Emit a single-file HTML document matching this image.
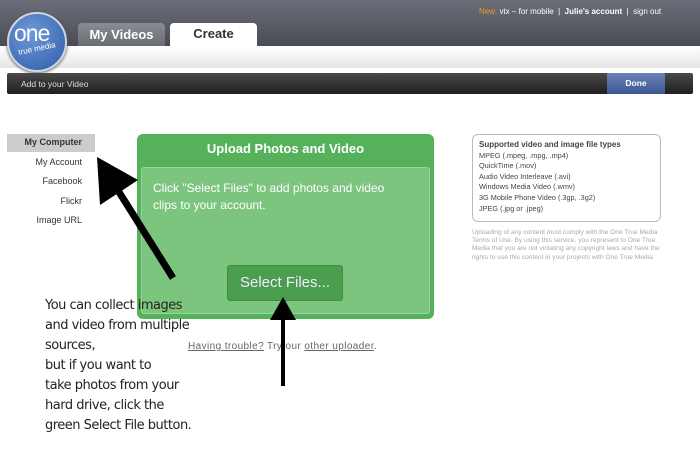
<!DOCTYPE html>
<html><head><style>
body{margin:0;width:700px;height:458px;overflow:hidden;background:#fff;font-family:"Liberation Sans",sans-serif;position:relative}
.a{position:absolute}
</style></head><body>
<div class="a" style="left:0;top:0;width:700px;height:46px;background:linear-gradient(#6b6e78,#4a4c55)"></div>
<div class="a" style="left:0;top:46px;width:700px;height:22px;background:linear-gradient(#fff,#e6e6e6)"></div>
<div class="a" style="left:78px;top:23px;width:87px;height:23px;background:linear-gradient(#8a8c94,#6a6c74);border-radius:4px 4px 0 0;color:#fff;font-weight:bold;font-size:13px;text-align:center;line-height:23px">My Videos</div>
<div class="a" style="left:170px;top:23px;width:87px;height:23px;background:#fff;border-radius:4px 4px 0 0;color:#333;font-weight:bold;font-size:13px;text-align:center;line-height:22px">Create</div>
<div class="a" style="left:7px;top:12px;width:56px;height:56px;border-radius:50%;background:radial-gradient(circle at 40% 35%,#6f9ad8,#2c5aa8);border:2px solid #cfd6e2;box-shadow:0 1px 3px #555"></div>
<div class="a" style="left:14px;top:22px;color:#fff;font-size:23px;line-height:22px;letter-spacing:-1px">one</div>
<div class="a" style="left:18px;top:44px;color:#fff;font-size:8px;transform:rotate(-12deg)">true media</div>
<div class="a" style="left:479px;top:7px;font-size:8px;color:#fff;white-space:nowrap"><span style="color:#f59a1e">New:</span> vtx – for mobile &nbsp;| &nbsp;<b>Julie's account</b> &nbsp;| &nbsp;sign out</div>
<div class="a" style="left:7px;top:73px;width:686px;height:21px;background:linear-gradient(#4a4a4a,#1e1e1e);border-radius:2px"></div>
<div class="a" style="left:21px;top:79px;font-size:8.5px;color:#ddd">Add to your Video</div>
<div class="a" style="left:607px;top:73px;width:58px;height:21px;background:linear-gradient(#6a82b8,#3c5694);color:#fff;font-weight:bold;font-size:8.5px;text-align:center;line-height:21px">Done</div>
<div class="a" style="left:7px;top:134px;width:88px;height:18px;background:#ccc"></div>
<div class="a" style="left:0;top:133px;width:82px;text-align:right;font-size:9px;color:#333;line-height:19.5px"><b>My Computer</b><br>My Account<br>Facebook<br>Flickr<br>Image URL</div>
<div class="a" style="left:137px;top:134px;width:297px;height:185px;background:#55b25a;border-radius:6px"></div>
<div class="a" style="left:137px;top:141px;width:297px;text-align:center;color:#fff;font-weight:bold;font-size:13px">Upload Photos and Video</div>
<div class="a" style="left:141px;top:167px;width:289px;height:147px;background:#7cc57f;border-radius:3px;border:1px solid #9ad39c;box-sizing:border-box"></div>
<div class="a" style="left:153px;top:180px;width:275px;color:#fff;font-size:12px;line-height:17px;white-space:nowrap">Click "Select Files" to add photos and video<br>clips to your account.</div>
<div class="a" style="left:227px;top:265px;width:116px;height:36px;background:#4a9e4d;border-radius:3px;border:1px solid #3d8a40;box-sizing:border-box;color:#eef;font-size:15px;text-align:center;line-height:34px">Select Files...</div>
<div class="a" style="left:188px;top:341px;font-size:10px;color:#666;letter-spacing:0.4px"><u>Having trouble?</u> Try our <u>other uploader</u>.</div>
<div class="a" style="left:472px;top:134px;width:189px;height:88px;border:1px solid #bbb;border-radius:6px;box-sizing:border-box"></div>
<div class="a" style="left:479px;top:140px;font-size:7.3px;color:#444;line-height:10.6px"><b style="font-size:8px">Supported video and image file types</b><br>MPEG (.mpeg, .mpg, .mp4)<br>QuickTime (.mov)<br>Audio Video Interleave (.avi)<br>Windows Media Video (.wmv)<br>3G Mobile Phone Video (.3gp, .3g2)<br>JPEG (.jpg or .jpeg)</div>
<div class="a" style="left:472px;top:229px;width:196px;font-size:6.6px;color:#aaa;line-height:8.2px">Uploading of any content must comply with the One True Media Terms of Use. By using this service, you represent to One True Media that you are not violating any copyright laws and have the rights to use this content in your projects with One True Media.</div>
<div class="a" style="left:45px;top:296px;font-size:13px;color:#222;line-height:20px;font-family:'DejaVu Sans',sans-serif;letter-spacing:-0.5px">You can collect images<br>and video from multiple<br>sources,<br>but if you want to<br>take photos from your<br>hard drive, click the<br>green Select File button.</div>
<svg class="a" style="left:0;top:0" width="700" height="458">
<line x1="173" y1="278" x2="114" y2="184" stroke="#000" stroke-width="7"/>
<polygon points="97,157 138,180 100,205" fill="#000"/>
<line x1="283" y1="386" x2="283" y2="315" stroke="#000" stroke-width="4"/>
<polygon points="283,297 270,320 296,320" fill="#000"/>
</svg>
</body></html>
